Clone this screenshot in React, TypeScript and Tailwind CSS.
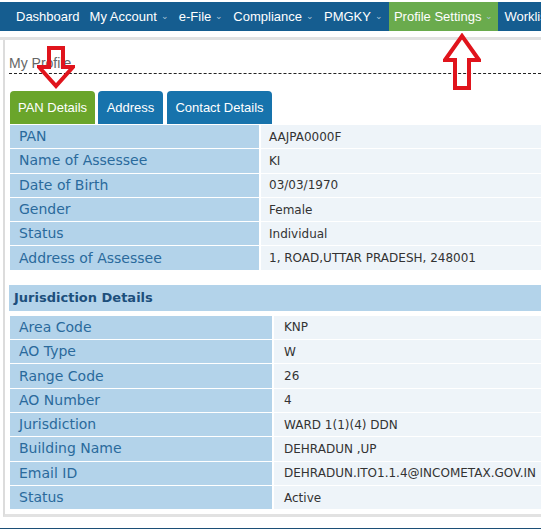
import React from "react";

const navItems: { label: string; caret: boolean; active?: boolean }[] = [
  { label: "Dashboard", caret: false },
  { label: "My Account", caret: true },
  { label: "e-File", caret: true },
  { label: "Compliance", caret: true },
  { label: "PMGKY", caret: true },
  { label: "Profile Settings", caret: true, active: true },
  { label: "Worklist", caret: false },
];

const pan: [string, string][] = [
  ["PAN", "AAJPA0000F"],
  ["Name of Assessee", "KI"],
  ["Date of Birth", "03/03/1970"],
  ["Gender", "Female"],
  ["Status", "Individual"],
  ["Address of Assessee", "1, ROAD,UTTAR PRADESH, 248001"],
];

const jur: [string, string][] = [
  ["Area Code", "KNP"],
  ["AO Type", "W"],
  ["Range Code", "26"],
  ["AO Number", "4"],
  ["Jurisdiction", "WARD 1(1)(4) DDN"],
  ["Building Name", "DEHRADUN ,UP"],
  ["Email ID", "DEHRADUN.ITO1.1.4@INCOMETAX.GOV.IN"],
  ["Status", "Active"],
];

function Row({ k, v, lw, vp }: { k: string; v: string; lw: string; vp: string }) {
  return (
    <div className="flex h-[24.3px] border-b border-white">
      <div className={`${lw} shrink-0 bg-[#b3d3ea] pl-[9px] flex items-center text-[14px] text-[#2a6a9c]`}>{k}</div>
      <div className={`flex-1 ml-[2px] bg-[#eef4f9] ${vp} flex items-center text-[12px] text-[#333] whitespace-nowrap`}>{v}</div>
    </div>
  );
}

function Arrow({ dir }: { dir: "up" | "down" }) {
  const d =
    dir === "down"
      ? "M12 3 H26 V22 H36 L19 41 L2 22 H12 Z"
      : "M12 55 H26 V27 H36 L19 3 L2 27 H12 Z";
  return (
    <svg width="38" height={dir === "down" ? 44 : 58} viewBox={`0 0 38 ${dir === "down" ? 44 : 58}`}>
      <path d={d} fill="none" stroke="#e0141c" strokeWidth="4" strokeLinejoin="miter" />
    </svg>
  );
}

export default function App() {
  return (
    <div className="relative w-[541px] h-[529px] overflow-hidden bg-white" style={{ fontFamily: "Verdana, 'DejaVu Sans', sans-serif" }}>
      <div className="h-[2px] bg-white" />
      <div className="flex h-[29px] bg-[#155d90] pl-[11px] whitespace-nowrap" style={{ fontFamily: "'Liberation Sans', Arial, sans-serif" }}>
        {navItems.map((n) => (
          <div
            key={n.label}
            className={`flex items-center h-full text-[13px] text-white ${n.active ? "bg-[#6aab4d] px-[5px] mx-[1px]" : "px-[5px]"}`}
          >
            {n.label}
            {n.caret && <span className="ml-[4px] text-[9px] text-[#a9c4d8]">&#8964;</span>}
          </div>
        ))}
      </div>
      <div className="h-[6px]" />
      <div className="h-[3px] bg-[#e2e2e2]" />
      <div className="ml-[3px] border-l-2 border-[#dcdcdc] border-b-[3px] border-b-[#e2e2e2] pl-[4px] pb-[4px]">
        <div className="pt-[15px] text-[14px] text-[#666] leading-[17px]" style={{ fontFamily: "'Liberation Sans', Arial, sans-serif" }}>
          My Profile
        </div>
        <div className="border-t border-dashed border-[#222] mt-[1px]" />
        <div className="flex gap-[3px] ml-[1px] mt-[17px] h-[33px]" style={{ fontFamily: "'Liberation Sans', Arial, sans-serif" }}>
          <div className="w-[85px] rounded-t-[4px] bg-[#6aa52b] text-white text-[13px] flex items-center justify-center">PAN Details</div>
          <div className="w-[65px] rounded-t-[4px] bg-[#1773ac] text-white text-[13px] flex items-center justify-center">Address</div>
          <div className="w-[105px] ml-[1px] rounded-t-[4px] bg-[#1773ac] text-white text-[13px] flex items-center justify-center">Contact Details</div>
        </div>
        <div className="ml-[1px] mt-[1px]">
          {pan.map(([k, v]) => (
            <Row key={k} k={k} v={v} lw="w-[249px]" vp="pl-[8px]" />
          ))}
        </div>
        <div className="mt-[14px] h-[26px] bg-[#b3d3ea] flex items-center pl-[5px] text-[13px] font-bold text-[#1d4f7c]">
          Jurisdiction Details
        </div>
        <div className="ml-[1px] mt-[5px]">
          {jur.map(([k, v], i) => (
            <Row key={k + i} k={k} v={v} lw="w-[262px]" vp="pl-[10px]" />
          ))}
        </div>
      </div>
      <div className="mt-[11px] h-[3px] bg-[#1c4f77]" />
      <div className="absolute left-[37px] top-[45px]">
        <Arrow dir="down" />
      </div>
      <div className="absolute left-[443px] top-[33px]">
        <Arrow dir="up" />
      </div>
    </div>
  );
}
